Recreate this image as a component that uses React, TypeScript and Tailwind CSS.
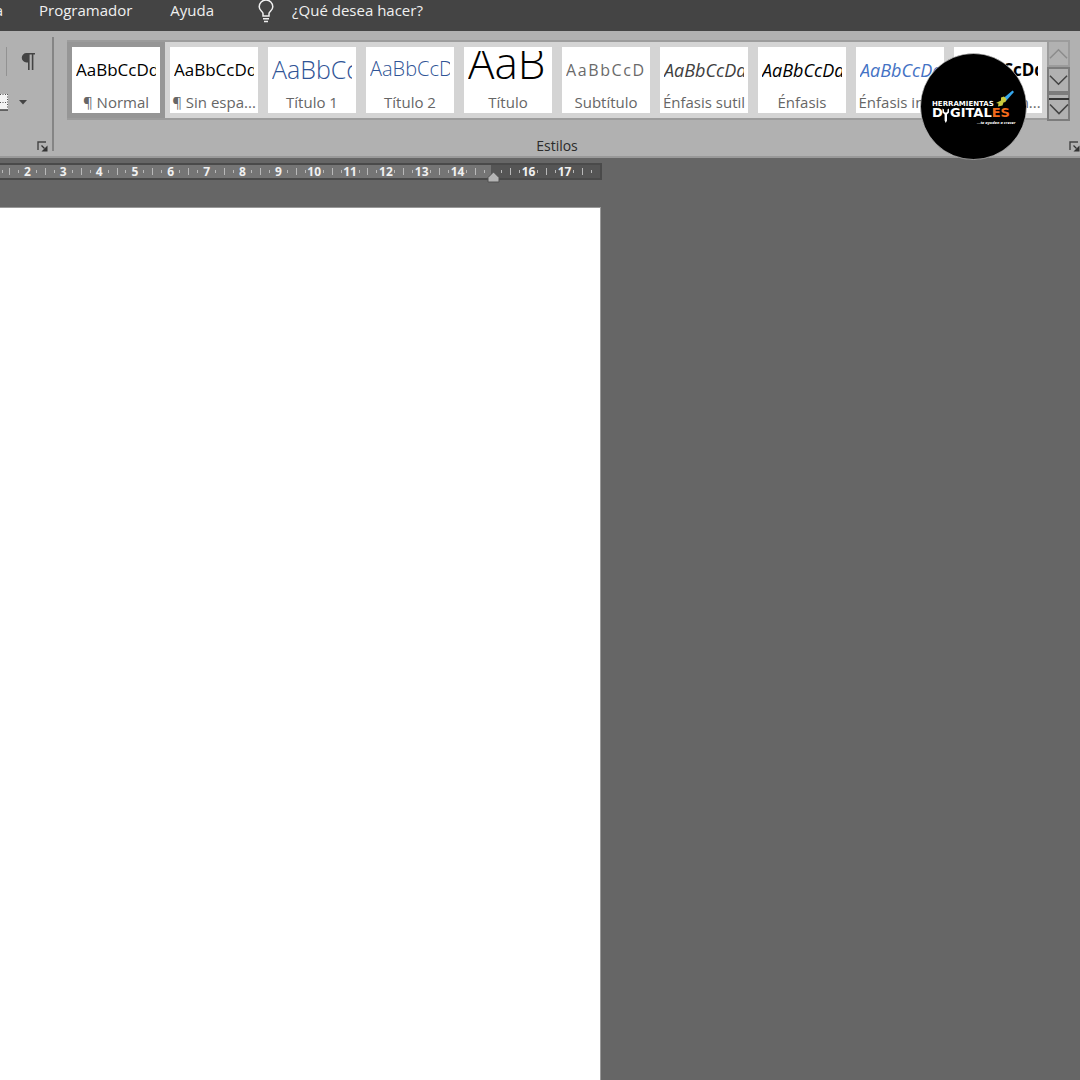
import React from 'react';

const styles = [
  { label: '¶ Normal', sample: 'AaBbCcDd', preview: 'text-[17px] leading-[38px] text-black', active: true },
  { label: '¶ Sin espa...', sample: 'AaBbCcDd', preview: 'text-[17px] leading-[38px] text-black' },
  { label: 'Título 1', sample: 'AaBbCc', preview: 'text-[25px] leading-[36px] font-light text-[#2f5496]' },
  { label: 'Título 2', sample: 'AaBbCcD', preview: 'text-[20px] leading-[36px] font-light text-[#2f5496]' },
  { label: 'Título', sample: 'AaB', preview: 'text-[44px] leading-[22px] font-light text-black' },
  { label: 'Subtítulo', sample: 'AaBbCcD', preview: 'text-[16px] leading-[38px] tracking-widest text-[#6a6a6a]' },
  { label: 'Énfasis sutil', sample: 'AaBbCcDd', preview: 'text-[18px] leading-[38px] italic text-[#404040]' },
  { label: 'Énfasis', sample: 'AaBbCcDd', preview: 'text-[18px] leading-[38px] italic text-black' },
  { label: 'Énfasis int...', sample: 'AaBbCcDd', preview: 'text-[18px] leading-[38px] italic text-[#4472c4]' },
  { label: 'Texto en n...', sample: 'AaBbCcDd', preview: 'text-[17px] leading-[38px] font-bold text-black' },
];

const LauncherIcon = () => (
  <svg width="11" height="11" viewBox="0 0 11 11" fill="none">
    <path d="M1 9V1h8" stroke="#444" strokeWidth="1.4" />
    <path d="M4.5 4.5l3 3" stroke="#333" strokeWidth="1.2" />
    <path d="M10.500 4.500v6h-6L6.500 8.500 8.500 6.500z" fill="#333" />
  </svg>
);

const Chevron = ({ up = false, color = '#444' }: { up?: boolean; color?: string }) => (
  <svg width="20" height="12" viewBox="0 0 20 12" fill="none" stroke={color} strokeWidth="1.6">
    <path d={up ? 'M1 10.500L10 1.500l9 9' : 'M1 1.500l9 9 9-9'} />
  </svg>
);

const MenuBar = () => (
  <nav className="flex h-[31px] items-start bg-[#444444] text-[15px] font-medium leading-[20px] text-[#f0f0f0]">
    <a href="#vista" className="flex w-[3px] justify-end overflow-hidden">a</a>
    <a href="#programador" className="ml-9">Programador</a>
    <a href="#ayuda" className="ml-[38px]">Ayuda</a>
    <label htmlFor="tell-me" className="ml-[44px] block" aria-label="Buscar">
      <svg width="16" height="23" viewBox="0 0 16 23" fill="none" stroke="#f0f0f0" strokeWidth="1.5">
        <path d="M5 16v-2.500C5 11.500 1.200 10.500 1.200 6.800a6.800 6.800 0 0 1 13.600 0C14.800 10.500 11 11.500 11 13.500V16z" />
        <path d="M5 18.800h6M6 21.400h4" />
      </svg>
    </label>
    <input
      id="tell-me"
      placeholder="¿Qué desea hacer?"
      className="ml-[18px] w-48 bg-transparent leading-[20px] outline-none placeholder:text-[#f0f0f0]"
    />
  </nav>
);

const ParagraphGroup = () => (
  <div className="flex w-[54px] shrink-0 flex-col py-[6px]">
    <div className="flex h-[114px] flex-col border-r-2 border-[#858585]">
      <div className="flex items-center justify-between pr-[15px] pt-[10px]">
        <span className="h-[29px] w-[7px] border-r border-[#929292]" />
        <button aria-label="Mostrar todo" className="mr-0.5">
          <svg width="14" height="18" viewBox="0 0 14 18" fill="#444">
            <path d="M5.500 0H14v1.500h-1.600V17h-1.600V1.500H8.600V17H7V9.500H5.500a4.700 4.700 0 0 1 0-9.500z" />
          </svg>
        </button>
      </div>
      <button aria-label="Bordes" className="mt-[18px] flex items-center gap-[11px]">
        <svg width="8" height="17" viewBox="0 0 8 17">
          <path d="M0 0h8v16H0z" fill="#f4f4f4" />
          <path d="M0 .5h7M0 8.500h7M7.500 0v15" stroke="#555" strokeDasharray="1 1.500" />
          <path d="M0 16h8" stroke="#444" strokeWidth="1.500" />
        </svg>
        <svg width="8" height="5" viewBox="0 0 8 5" fill="#444"><path d="M0 0h8L4 4.500z" /></svg>
      </button>
      <button aria-label="Configuración de párrafo" className="mr-1 mt-[30px] self-end">
        <LauncherIcon />
      </button>
    </div>
  </div>
);

const StylesGroup = () => (
  <div className="ml-[13px] flex min-w-0 flex-1 flex-col pt-[9px]">
    <div className="flex pr-[10px]">
      <div className="grid h-20 flex-1 grid-cols-10 border-y-2 border-[#9c9c9c] bg-[#d4d4d4]">
        {styles.map((s) => (
          <button
            key={s.label}
            className={`min-w-0 border-5 ${s.active ? 'border-[#969696]' : 'border-transparent'}`}
          >
            <span className="flex h-[66px] flex-col bg-white">
              <span className="mx-1 mt-1 flex h-[40px] items-start overflow-hidden">
                <span className={`block whitespace-nowrap ${s.preview}`}>{s.sample}</span>
              </span>
              <span className="whitespace-nowrap text-center text-[15px] leading-[22px] text-[#666]">
                {s.label}
              </span>
            </span>
          </button>
        ))}
      </div>
      <div className="flex w-[23px] flex-col">
        <button aria-label="Fila anterior" className="flex h-[27px] items-center justify-center border-2 border-[#9c9c9c]">
          <Chevron up color="#8c8c8c" />
        </button>
        <button aria-label="Fila siguiente" className="flex h-[26px] items-center justify-center border-2 border-[#7c7c7c]">
          <Chevron />
        </button>
        <button aria-label="Más estilos" className="flex h-[28px] flex-col items-center justify-between border-2 border-[#7c7c7c] pb-1">
          <span className="mt-[3px] h-[2px] w-5 bg-[#333]" />
          <Chevron />
        </button>
      </div>
    </div>
    <div className="flex items-center pt-[14px]">
      <span className="flex-1 text-center text-[14px] font-medium leading-[22px] text-[#2b2b2b]">Estilos</span>
      <button aria-label="Panel de estilos" className="ml-[22px]">
        <LauncherIcon />
      </button>
    </div>
  </div>
);

const Tick = () => (
  <span className="flex flex-1 items-center justify-center"><i className="h-[7px] w-px bg-[#b8b8b8]" /></span>
);
const Dot = () => (
  <span className="flex flex-1 items-center justify-center"><i className="h-[3px] w-px bg-[#b8b8b8]" /></span>
);
const Num = ({ n }: { n: number }) => (
  <span className="flex w-0 flex-1 items-center justify-center">{n}</span>
);

const Ruler = () => (
  <div className="relative flex h-[17px] w-[602px] border-y-2 border-r-2 border-[#4a4a4a] text-[12px] font-bold leading-[13px] text-[#f0f0f0]">
    <div className="flex w-[491px] bg-[#757575] pr-[2px]">
      <span className="flex w-[5px]"><Dot /></span>
      <div className="grid w-[466px] grid-cols-13">
        {[2, 3, 4, 5, 6, 7, 8, 9, 10, 11, 12, 13, 14].map((n) => (
          <span key={n} className="flex"><Tick /><Dot /><Num n={n} /><Dot /></span>
        ))}
      </div>
      <Tick />
      <Dot />
    </div>
    <div className="flex flex-1 bg-[#555555] pl-[6px] pr-1">
      <Dot /><Tick /><Dot /><Num n={16} /><Dot /><Tick /><Dot /><Num n={17} /><Dot /><Tick /><Dot />
    </div>
    <svg className="absolute left-[487px] top-[6px]" width="13" height="12" viewBox="0 0 13 12">
      <path d="M6.500 1L12 6.500V11H1V6.500z" fill="#b5b5b5" stroke="#505050" />
    </svg>
  </div>
);

const Logo = () => (
  <svg
    className="absolute right-[53px] top-[53px]"
    width="107"
    height="107"
    viewBox="0 0 107 107"
    fontFamily="DejaVu Sans, sans-serif"
    fontWeight="700"
    fill="#fff"
  >
    <circle cx="53.500" cy="53.500" r="53" fill="#000" stroke="#ddd" strokeWidth=".6" />
    <text x="12" y="53" fontSize="7">HERRAMIENTAS</text>
    <text x="12" y="64" fontSize="13">D</text>
    <path d="M22.500 55.500l1.500 1v2l1 1h1.500l1-1v-2l1.500-1v4l-2 2v6l-1.200 2.500-1.200-2.500v-6l-2.100-2z" />
    <text x="30" y="64" fontSize="13">GITAL<tspan fill="#f26a1b">ES</tspan></text>
    <text x="57" y="71" fontSize="4" fontStyle="italic" fontFamily="Open Sans, sans-serif">...te ayudan a crecer</text>
    <path d="M92.500 37.500l1.500 1.500-8 9-3-2.500z" fill="#35a7ee" />
    <path d="M81 44.500l3-1 2.500 2.500-1 3-2 .5-1 3-4.500 1 .5-3-2.500-.5 5-2.500z" fill="#c9ca3e" />
  </svg>
);

const App: React.FC = () => {
  return (
    <div className="relative flex min-h-screen flex-col overflow-hidden bg-[#666666] font-['Open_Sans','Noto_Sans',sans-serif]">
      <MenuBar />

      {/* Ribbon */}
      <header className="flex h-[127px] border-b-2 border-[#999] bg-[#b1b1b1]">
        <ParagraphGroup />
        <StylesGroup />
      </header>

      {/* Document */}
      <main className="flex flex-1 flex-col pt-[5px]">
        <Ruler />
        <div className="mt-[27px] w-[601px] flex-1 border-r border-t border-[#999] bg-white" />
      </main>

      <Logo />
    </div>
  );
};

export default App;
